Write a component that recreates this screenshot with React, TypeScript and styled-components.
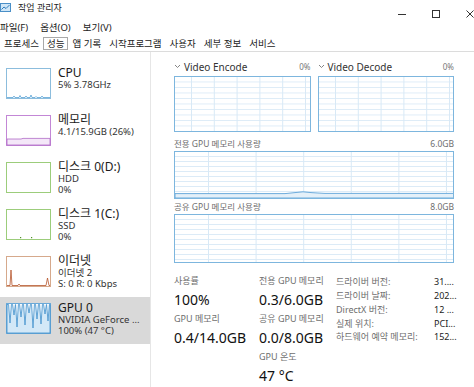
import React from "react";
import styled, { createGlobalStyle } from "styled-components";

const Global = createGlobalStyle`
  html, body { margin: 0; padding: 0; background: #fff; }
  body {
    font-family: "Noto Sans", "Noto Sans CJK KR", sans-serif;
    color: #1a1a1a;
    -webkit-font-smoothing: antialiased;
  }
  #root { width: 474px; height: 387px; overflow: hidden; }
`;

const Window = styled.div`
  width: 474px;
  height: 387px;
  display: flex;
  flex-direction: column;
  background: #fff;
  overflow: hidden;
`;

const TitleBar = styled.div`
  height: 20px;
  flex-shrink: 0;
  display: flex;
  align-items: flex-start;
`;

const AppIcon = styled.svg`
  margin-top: 3px;
  flex-shrink: 0;
`;

const Title = styled.div`
  margin-left: 7px;
  margin-top: 2px;
  font-size: 9px;
  line-height: 11px;
  color: #222;
`;

const Controls = styled.div`
  margin-left: auto;
  margin-top: 10px;
  display: flex;
  gap: 26px;
  align-items: center;
`;

const MenuBar = styled.div`
  height: 14px;
  flex-shrink: 0;
  display: flex;
  gap: 12px;
  align-items: center;
  font-size: 9.5px;
  color: #222;
`;

const TabBar = styled.div`
  height: 16px;
  margin-top: 2px;
  flex-shrink: 0;
  display: flex;
  align-items: flex-start;
  border-bottom: 1px solid #dcdcdc;
  box-sizing: border-box;
`;

const Tab = styled.div<{ $active?: boolean }>`
  height: 13px;
  margin-top: 1px;
  padding: 0 3px;
  font-size: 9.5px;
  line-height: 12px;
  color: #222;
  box-sizing: border-box;
  border: 1px solid ${(p) => (p.$active ? "#a9a9a9" : "transparent")};
  background: ${(p) => (p.$active ? "#fff" : "transparent")};
`;

const Body = styled.div`
  flex: 1;
  display: flex;
  min-height: 0;
`;

const Sidebar = styled.div`
  width: 150px;
  padding-top: 10px;
  margin-right: 2px;
  border-right: 1px solid #e6e6e6;
  flex-shrink: 0;
  display: flex;
  flex-direction: column;
`;

const Item = styled.div<{ $selected?: boolean }>`
  height: 47px;
  box-sizing: border-box;
  padding: 6px 0 0 6px;
  display: flex;
  gap: 7px;
  background: ${(p) => (p.$selected ? "#d9d9d9" : "transparent")};
`;

const ItemText = styled.div`
  display: flex;
  flex-direction: column;
  margin-top: -3px;
  min-width: 0;
`;

const ItemName = styled.div`
  font-size: 12px;
  line-height: 15px;
  color: #1a1a1a;
  white-space: nowrap;
`;

const ItemSub = styled.div`
  font-size: 9.5px;
  line-height: 10.5px;
  color: #333;
  white-space: nowrap;
`;

const Main = styled.div`
  flex: 1;
  padding: 7px 20px 0 21px;
  display: flex;
  flex-direction: column;
  min-width: 0;
`;

const TopRow = styled.div`
  display: grid;
  grid-template-columns: 1fr 1fr;
  gap: 7px;
`;

const TopCol = styled.div`
  display: flex;
  flex-direction: column;
`;

const GraphHead = styled.div`
  height: 15px;
  margin-bottom: 2px;
  display: flex;
  align-items: center;
`;

const HeadTitle = styled.span`
  margin-left: 3px;
  font-size: 10px;
  color: #333;
`;

const HeadRight = styled.span`
  margin-left: auto;
  font-size: 8px;
  color: #777;
`;

const LabelRow = styled.div<{ $mt: number }>`
  height: 15px;
  margin-top: ${(p) => p.$mt}px;
  display: flex;
  align-items: center;
  justify-content: space-between;
  font-size: 8.5px;
  color: #6e6e6e;
`;

const Graph = styled.div<{ $h: number; $cw: number; $cx: number; $rh: number }>`
  position: relative;
  height: ${(p) => p.$h}px;
  box-sizing: border-box;
  border: 1px solid #7db6de;
  background-color: #fff;
  background-image: linear-gradient(to right, #d8e9f6 1px, transparent 1px),
    linear-gradient(to bottom, #dcebf7 1px, transparent 1px);
  background-size: ${(p) => p.$cw}px 100%, 100% ${(p) => p.$rh}px;
  background-position: ${(p) => p.$cx}px 0, 0 ${(p) => p.$rh - 1}px;
  overflow: hidden;
`;

const GraphLine = styled.svg`
  position: absolute;
  left: 0;
  bottom: 0;
`;

const Stats = styled.div`
  margin-top: 10px;
  display: grid;
  grid-template-columns: 85px 77px 1fr;
`;

const StatCol = styled.div`
  display: flex;
  flex-direction: column;
`;

const StatLabel = styled.div`
  height: 16px;
  line-height: 16px;
  font-size: 9px;
  color: #6e6e6e;
  white-space: nowrap;
`;

const StatValue = styled.div`
  height: 22px;
  line-height: 22px;
  font-size: 14px;
  color: #111;
  white-space: nowrap;
`;

const InfoGrid = styled.div`
  padding-top: 2px;
  display: grid;
  grid-template-columns: 98px 1fr;
  grid-auto-rows: 13.75px;
  align-items: center;
  font-size: 9px;
  white-space: nowrap;
`;

const InfoKey = styled.div`
  color: #6e6e6e;
`;

const InfoVal = styled.div`
  color: #222;
`;

type ThumbProps = {
  border: string;
  stroke: string;
  fill?: string;
  d?: string;
  dots?: number[];
};

const Thumb = ({ border, stroke, fill, d, dots }: ThumbProps) => (
  <svg width="45" height="31" viewBox="0 0 45 31" style={{ flexShrink: 0 }}>
    <rect x="0.5" y="0.5" width="44" height="30" fill="#fff" stroke={border} />
    {d && <path d={d} fill={fill ?? "none"} stroke={stroke} strokeWidth="0.8" />}
    {dots?.map((x) => (
      <rect key={x} x={x} y="28" width="1.2" height="1.2" fill={stroke} />
    ))}
  </svg>
);

const gpuDips: [number, number][] = [
  [4, 20], [8, 12], [11, 24], [15, 14], [19, 22], [23, 10], [27, 25], [31, 16], [35, 21], [39, 11], [42, 18],
];
const gpuPath =
  "M1 30 L1 1.5 " +
  gpuDips.map(([x, y]) => `L${x - 1.4} 1.5 L${x} ${y} L${x + 1.4} 1.5`).join(" ") +
  " L44 1.5 L44 30 Z";

const cpuPath =
  "M1 29.5 L7 29.5 L8 28 L9 29.5 L13 29.5 L14 27.5 L15 29.5 L19 29.5 L20 28 L21 29.5 L24 29.5 L25 27 L26 29.5 L29 29.5 L30 28.5 L31 29.5 L35 29.5 L36 28 L37 29.5 L44 29.5";
const memPath = "M1 30 L1 24 L15 24 L17 23.4 L44 23.4 L44 30 Z";
const ethPath =
  "M1 29.5 L4 29.5 L5 14 L6 29.5 L12 29.5 L13 28 L14 29.5 L40 29.5 L41.5 22 L43 29.5 L44 29.5";

const Chevron = () => (
  <svg width="7" height="5" viewBox="0 0 7 5">
    <path d="M1 1 L3.5 3.5 L6 1" fill="none" stroke="#777" strokeWidth="0.9" />
  </svg>
);

export default function App() {
  return (
    <Window>
      <Global />
      <TitleBar>
        <AppIcon width="11" height="9" viewBox="0 0 11 9">
          <rect x="0.5" y="0.5" width="10" height="8" fill="#cfe6f7" stroke="#4a8fc7" />
          <path d="M1.5 6.5 L4 4 L6 5.5 L9.5 2" fill="none" stroke="#2f7dbd" strokeWidth="1" />
        </AppIcon>
        <Title>작업 관리자</Title>
        <Controls>
          <svg width="8" height="8" viewBox="0 0 8 8">
            <path d="M0 4.5 H8" stroke="#333" strokeWidth="1" />
          </svg>
          <svg width="8" height="8" viewBox="0 0 8 8">
            <rect x="0.5" y="0.5" width="7" height="7" fill="none" stroke="#333" strokeWidth="1" />
          </svg>
          <svg width="8" height="8" viewBox="0 0 8 8">
            <path d="M0.5 0.5 L7.5 7.5 M7.5 0.5 L0.5 7.5" stroke="#333" strokeWidth="1" />
          </svg>
        </Controls>
      </TitleBar>
      <MenuBar>
        <span>파일(F)</span>
        <span>옵션(O)</span>
        <span>보기(V)</span>
      </MenuBar>
      <TabBar>
        <Tab>프로세스</Tab>
        <Tab $active>성능</Tab>
        <Tab>앱 기록</Tab>
        <Tab>시작프로그램</Tab>
        <Tab>사용자</Tab>
        <Tab>세부 정보</Tab>
        <Tab>서비스</Tab>
      </TabBar>
      <Body>
        <Sidebar>
          <Item>
            <Thumb border="#8cbddd" stroke="#5aa3d6" fill="#e6f2fa" d={cpuPath} />
            <ItemText>
              <ItemName>CPU</ItemName>
              <ItemSub>5% 3.78GHz</ItemSub>
            </ItemText>
          </Item>
          <Item>
            <Thumb border="#c387d6" stroke="#b06ac6" fill="#f4e7f8" d={memPath} />
            <ItemText>
              <ItemName>메모리</ItemName>
              <ItemSub>4.1/15.9GB (26%)</ItemSub>
            </ItemText>
          </Item>
          <Item>
            <Thumb border="#9ccd7b" stroke="#6fb444" />
            <ItemText>
              <ItemName>디스크 0(D:)</ItemName>
              <ItemSub>HDD</ItemSub>
              <ItemSub>0%</ItemSub>
            </ItemText>
          </Item>
          <Item>
            <Thumb border="#9ccd7b" stroke="#4f8f2a" dots={[14, 25]} />
            <ItemText>
              <ItemName>디스크 1(C:)</ItemName>
              <ItemSub>SSD</ItemSub>
              <ItemSub>0%</ItemSub>
            </ItemText>
          </Item>
          <Item>
            <Thumb border="#d6a98c" stroke="#b5532a" d={ethPath} />
            <ItemText>
              <ItemName>이더넷</ItemName>
              <ItemSub>이더넷 2</ItemSub>
              <ItemSub>S: 0 R: 0 Kbps</ItemSub>
            </ItemText>
          </Item>
          <Item $selected>
            <Thumb border="#6aa9d8" stroke="#3f8fcc" fill="#d3e8f7" d={gpuPath} />
            <ItemText>
              <ItemName>GPU 0</ItemName>
              <ItemSub>NVIDIA GeForce ...</ItemSub>
              <ItemSub>100% (47 °C)</ItemSub>
            </ItemText>
          </Item>
        </Sidebar>
        <Main>
          <TopRow>
            <TopCol>
              <GraphHead>
                <Chevron />
                <HeadTitle>Video Encode</HeadTitle>
                <HeadRight>0%</HeadRight>
              </GraphHead>
              <Graph $h={56} $cw={22.8} $cx={16} $rh={5.5} />
            </TopCol>
            <TopCol>
              <GraphHead>
                <Chevron />
                <HeadTitle>Video Decode</HeadTitle>
                <HeadRight>0%</HeadRight>
              </GraphHead>
              <Graph $h={56} $cw={22.8} $cx={16} $rh={5.5} />
            </TopCol>
          </TopRow>
          <LabelRow $mt={4}>
            <span>전용 GPU 메모리 사용량</span>
            <span>6.0GB</span>
          </LabelRow>
          <Graph $h={49} $cw={47.6} $cx={33} $rh={5} >
            <GraphLine width="281" height="10" viewBox="0 0 281 10">
              <path
                d="M0 10 L0 5.6 L110 5.6 L120 4.6 L128 3.8 L136 4.6 L150 5.4 L281 5.4 L281 10 Z"
                fill="#e4f0f9"
                stroke="#5ea3d8"
                strokeWidth="0.9"
              />
            </GraphLine>
          </Graph>
          <LabelRow $mt={0}>
            <span>공유 GPU 메모리 사용량</span>
            <span>8.0GB</span>
          </LabelRow>
          <Graph $h={50} $cw={47.6} $cx={33} $rh={5} />
          <Stats>
            <StatCol>
              <StatLabel>사용률</StatLabel>
              <StatValue>100%</StatValue>
              <StatLabel>GPU 메모리</StatLabel>
              <StatValue>0.4/14.0GB</StatValue>
            </StatCol>
            <StatCol>
              <StatLabel>전용 GPU 메모리</StatLabel>
              <StatValue>0.3/6.0GB</StatValue>
              <StatLabel>공유 GPU 메모리</StatLabel>
              <StatValue>0.0/8.0GB</StatValue>
              <StatLabel>GPU 온도</StatLabel>
              <StatValue>47 °C</StatValue>
            </StatCol>
            <InfoGrid>
              <InfoKey>드라이버 버전:</InfoKey>
              <InfoVal>31....</InfoVal>
              <InfoKey>드라이버 날짜:</InfoKey>
              <InfoVal>202...</InfoVal>
              <InfoKey>DirectX 버전:</InfoKey>
              <InfoVal>12 ...</InfoVal>
              <InfoKey>실제 위치:</InfoKey>
              <InfoVal>PCI...</InfoVal>
              <InfoKey>하드웨어 예약 메모리:</InfoKey>
              <InfoVal>152...</InfoVal>
            </InfoGrid>
          </Stats>
        </Main>
      </Body>
    </Window>
  );
}
